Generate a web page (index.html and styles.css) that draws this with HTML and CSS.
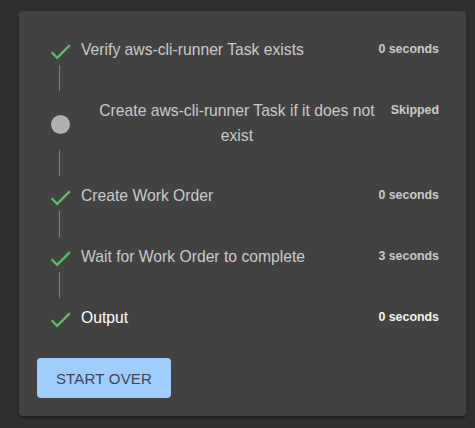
FILE: index.html
```html
<!DOCTYPE html>
<html lang="en">
<head>
<meta charset="utf-8">
<title>Steps</title>
<link rel="stylesheet" href="styles.css">
</head>
<body>
<div class="card">
  <div class="steps">
    <div class="step">
      <div class="icon"><svg class="check" viewBox="0 0 24 24" width="27" height="27"><path d="M9 16.17L4.83 12l-1.42 1.41L9 19 21 7l-1.41-1.41z"/></svg></div>
      <div class="label">Verify aws-cli-runner Task exists</div>
      <div class="duration">0 seconds</div>
    </div>
    <div class="connector"></div>
    <div class="step step-skipped">
      <div class="icon"><span class="dot"></span></div>
      <div class="label">Create aws-cli-runner Task if it does not exist</div>
      <div class="duration">Skipped</div>
    </div>
    <div class="connector"></div>
    <div class="step">
      <div class="icon"><svg class="check" viewBox="0 0 24 24" width="27" height="27"><path d="M9 16.17L4.83 12l-1.42 1.41L9 19 21 7l-1.41-1.41z"/></svg></div>
      <div class="label">Create Work Order</div>
      <div class="duration">0 seconds</div>
    </div>
    <div class="connector"></div>
    <div class="step">
      <div class="icon"><svg class="check" viewBox="0 0 24 24" width="27" height="27"><path d="M9 16.17L4.83 12l-1.42 1.41L9 19 21 7l-1.41-1.41z"/></svg></div>
      <div class="label">Wait for Work Order to complete</div>
      <div class="duration">3 seconds</div>
    </div>
    <div class="connector"></div>
    <div class="step step-active">
      <div class="icon"><svg class="check" viewBox="0 0 24 24" width="27" height="27"><path d="M9 16.17L4.83 12l-1.42 1.41L9 19 21 7l-1.41-1.41z"/></svg></div>
      <div class="label">Output</div>
      <div class="duration">0 seconds</div>
    </div>
  </div>
  <button class="btn" type="button">START OVER</button>
</div>
</body>
</html>
```
FILE: styles.css
```css
html, body {
  margin: 0;
  padding: 0;
}
body {
  background: #2f2f2f;
  font-family: "Liberation Sans", Arial, sans-serif;
  padding: 11px 9px 12px 19px;
}
.card {
  background: #424242;
  border-radius: 4px;
  box-shadow: 0 2px 2px rgba(0, 0, 0, 0.35);
  padding: 26px 27px 18px 18px;
}
.steps {
  display: flex;
  flex-direction: column;
  padding-left: 11px;
}
.step {
  display: flex;
  align-items: flex-start;
  color: #cacaca;
}
.icon {
  width: 24px;
  height: 28px;
  flex-shrink: 0;
  display: flex;
  align-items: center;
  justify-content: center;
  align-self: center;
  margin-right: 9px;
}
.check {
  flex-shrink: 0;
  fill: #5cbf68;
}
.dot {
  width: 19px;
  height: 19px;
  border-radius: 50%;
  background: #b0b0b0;
}
.label {
  flex: 1;
  font-size: 15.7px;
  line-height: 25px;
}
.step-skipped .label {
  text-align: center;
  padding: 0 0 2px 10px;
}
.duration {
  margin-left: 8px;
  font-size: 12.4px;
  font-weight: bold;
  line-height: 25px;
  white-space: nowrap;
}
.step-active {
  color: #ffffff;
}
.step-active .duration {
  color: #f2f2f2;
}
.connector {
  width: 0;
  height: 26px;
  margin: 0 0 7px 11px;
  border-left: 1px solid #808080;
}
.btn {
  display: block;
  margin-top: 25px;
  width: 134px;
  height: 40px;
  border: none;
  border-radius: 4px;
  background: #9fcdfe;
  color: #3d4553;
  font-family: "Liberation Sans", Arial, sans-serif;
  font-size: 15px;
  letter-spacing: 0.2px;
  padding: 0;
}
```
